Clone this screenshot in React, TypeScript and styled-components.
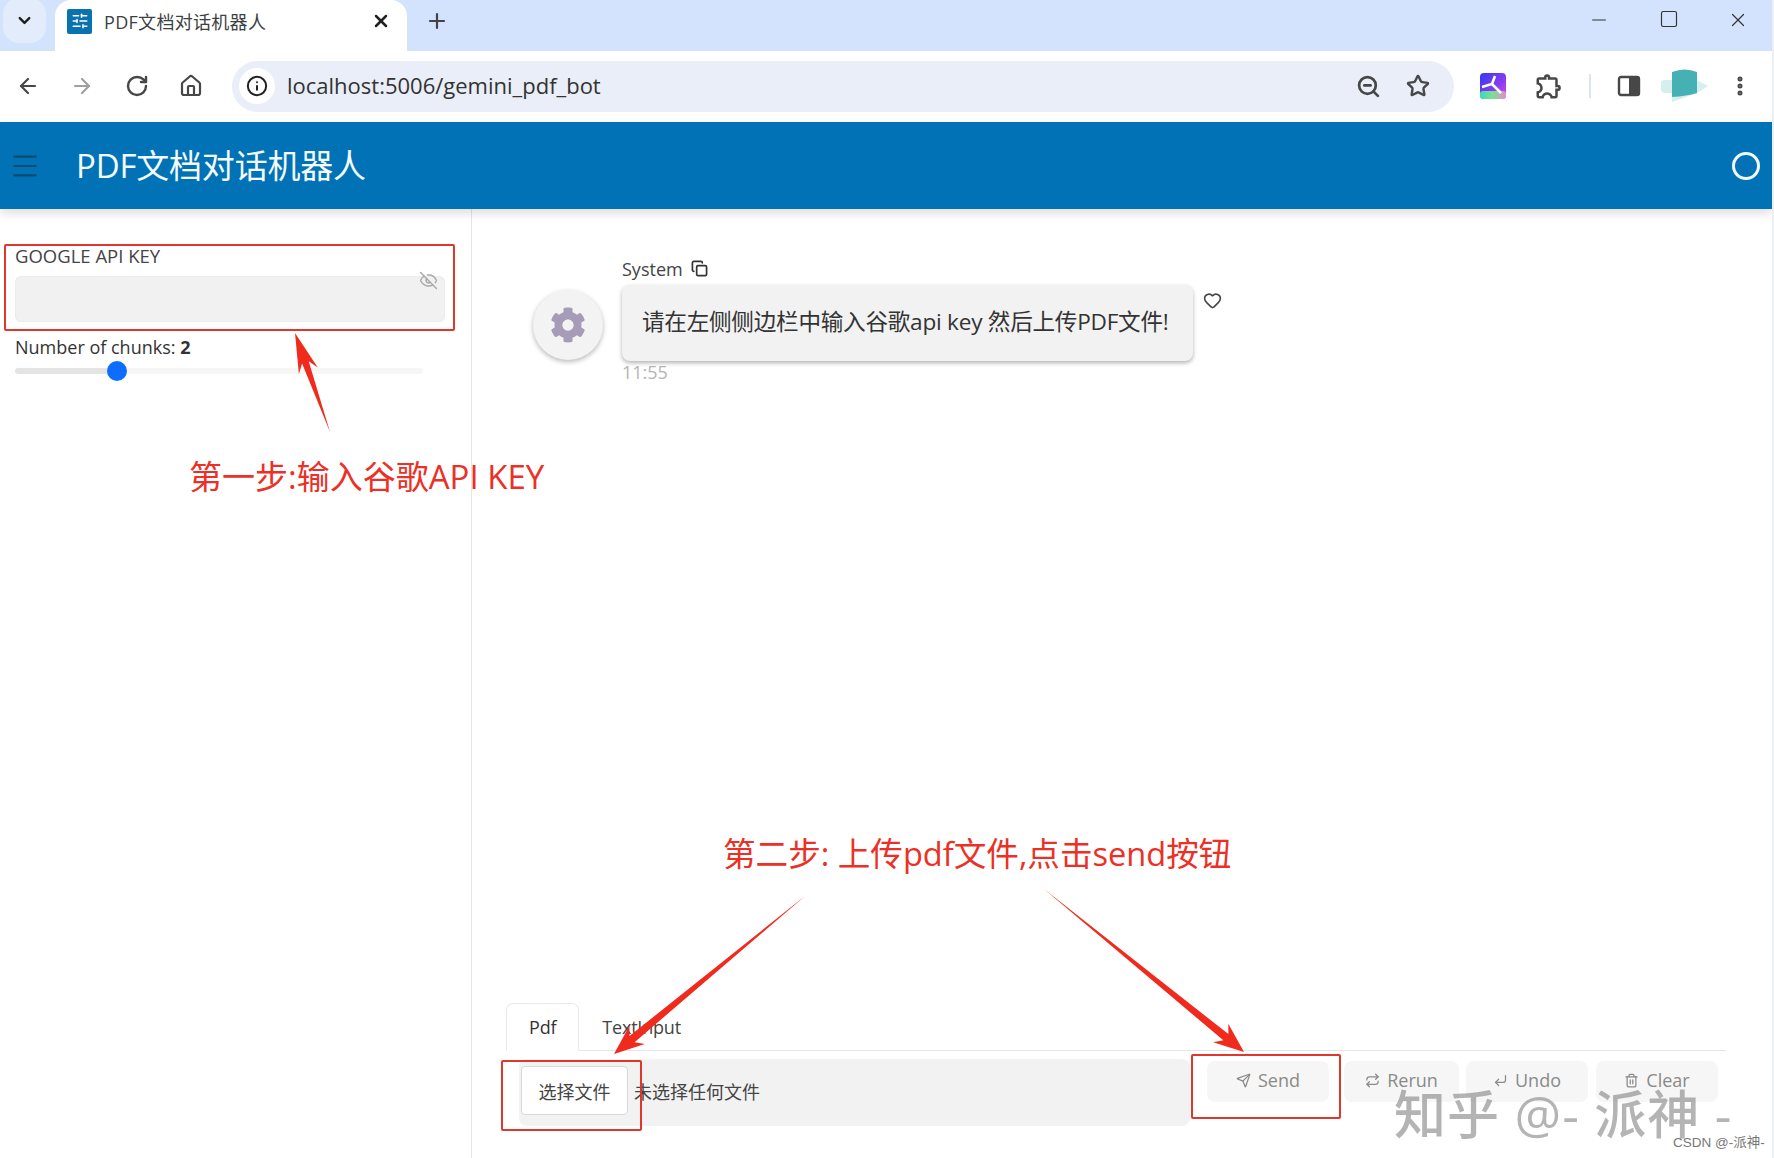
import React from "react";
import styled, { createGlobalStyle } from "styled-components";
import {
  ArrowLeft, ArrowRight, RotateCw, Home, Info, ZoomOut, Star, MoreVertical,
  Minus, Square, X, Menu, EyeOff, Copy, Heart, Send, Repeat, CornerDownLeft, Trash2,
  Plus, ChevronDown, SlidersHorizontal,
} from "lucide-react";
import { FaCog } from "react-icons/fa";
import { MdOutlineExtension } from "react-icons/md";

const SANS = `"Open Sans", "Noto Sans CJK SC", sans-serif`;

const Global = createGlobalStyle`
  html, body { margin: 0; padding: 0; background: #fff; }
  body { font-family: ${SANS}; width: 1774px; height: 1158px; overflow: hidden; }
  * { box-sizing: border-box; }
`;

const Page = styled.div`
  position: relative;
  width: 1774px;
  height: 1158px;
  display: flex;
  flex-direction: column;
  overflow: hidden;
  border-right: 2px solid #eceff1;
`;

/* browser chrome */
const TabStrip = styled.div`
  height: 51px;
  flex: none;
  background: #d3e3fd;
  display: flex;
  align-items: flex-start;
  padding-left: 3px;
`;
const TabMenu = styled.div`
  width: 43px;
  height: 45px;
  margin-top: -2px;
  border-radius: 16px;
  background: #e3ecfb;
  display: flex;
  align-items: center;
  justify-content: center;
  color: #1f1f1f;
`;
const ActiveTab = styled.div`
  width: 352px;
  height: 51px;
  margin-left: 9px;
  background: #fff;
  border-radius: 16px 16px 0 0;
  display: flex;
  align-items: center;
  padding: 0 16px 9px 12px;
`;
const Favicon = styled.div`
  width: 25px;
  height: 25px;
  background: #0b72b0;
  border-radius: 2px;
  display: flex;
  align-items: center;
  justify-content: center;
  color: #fff;
  flex: none;
`;
const TabTitle = styled.span`
  margin-left: 12px;
  flex: 1;
  font-size: 18px;
  color: #3c4043;
  letter-spacing: 0.3px;
`;
const NewTab = styled.div`
  margin: 9px 0 0 18px;
  color: #444;
  display: flex;
`;
const WindowControls = styled.div`
  margin-left: auto;
  display: flex;
  width: 184px;
  padding: 9px 23px 0 0;
  justify-content: space-between;
  color: #333;
`;

const Toolbar = styled.div`
  height: 71px;
  flex: none;
  background: #fff;
  border-radius: 0 12px 0 0;
  display: flex;
  align-items: center;
  padding: 0 0 1px 16px;
  color: #474747;
`;
const NavIcons = styled.div`
  display: flex;
  gap: 30.4px;
  width: 216px;
  flex: none;
`;
const NavSlot = styled.div<{ $dim?: boolean }>`
  color: ${(p) => (p.$dim ? "#a0a0a0" : "#474747")};
  display: flex;
`;
const AddressPill = styled.div`
  width: 1222px;
  height: 51px;
  flex: none;
  background: #e9eef8;
  border-radius: 26px;
  display: flex;
  align-items: center;
  padding: 0 24px 0 7px;
`;
const InfoDot = styled.div`
  width: 36px;
  height: 36px;
  background: #fff;
  border-radius: 50%;
  display: flex;
  align-items: center;
  justify-content: center;
  color: #222;
  flex: none;
`;
const UrlText = styled.span`
  margin-left: 12px;
  padding-bottom: 2px;
  flex: 1;
  font-size: 22px;
  color: #333;
`;
const PillIcons = styled.div`
  display: flex;
  gap: 25px;
  align-items: center;
`;
const ExtIcons = styled.div`
  display: grid;
  grid-template-columns: 54px 58px 24px 54px 56px 56px;
  justify-items: center;
  align-items: center;
  margin-left: 12px;
`;
const ToolSep = styled.div`
  width: 2px;
  height: 24px;
  background: #dbe3f2;
`;

/* app */
const AppHeader = styled.header`
  height: 87px;
  flex: none;
  background: #0072b5;
  display: flex;
  align-items: center;
  padding: 0 12px 0 9px;
  box-shadow: 0 4px 10px rgba(0, 0, 0, 0.14);
  position: relative;
  z-index: 1;
`;
const Burger = styled.div`
  color: #0d4a70;
  display: flex;
`;
const AppTitle = styled.h1`
  margin: 0 0 0 35px;
  padding-bottom: 3px;
  flex: 1;
  font-size: 33px;
  font-weight: 400;
  color: #f4fafd;
  letter-spacing: -0.2px;
`;
const StatusRing = styled.div`
  width: 28px;
  height: 28px;
  border: 3.5px solid #f2f8fb;
  border-radius: 50%;
`;

const Body = styled.div`
  flex: 1;
  display: flex;
  min-height: 0;
`;
const Sidebar = styled.aside`
  width: 472px;
  flex: none;
  border-right: 1px solid #e6e6e6;
  padding: 35px 15px 0;
  color: #333;
`;
const FieldLabel = styled.div`
  font-size: 18.5px;
  line-height: 24px;
  color: #444;
`;
const KeyField = styled.div`
  position: relative;
  width: 430px;
  height: 46px;
  margin-top: 8px;
  background: #f1f1f1;
  border-radius: 6px;
  box-shadow: inset 0 0 0 1px #ececec;
`;
const EyeSlot = styled.div`
  position: absolute;
  right: 7px;
  top: -5px;
  color: #a9a9a9;
  display: flex;
`;
const ChunksLabel = styled.div`
  margin-top: 13px;
  font-size: 18px;
  line-height: 24px;
  color: #333;
  b { font-weight: 700; }
`;
const SliderTrack = styled.div`
  position: relative;
  width: 408px;
  height: 6px;
  margin-top: 9px;
  background: #f6f6f6;
  border-radius: 3px;
`;
const SliderFill = styled.div`
  height: 100%;
  background: #e4e4e4;
  border-radius: 3px;
`;
const SliderThumb = styled.div`
  position: absolute;
  top: -7px;
  width: 20px;
  height: 20px;
  margin-left: -10px;
  background: #0d6efd;
  border-radius: 50%;
`;

const Main = styled.main`
  flex: 1;
  min-width: 0;
  display: flex;
  flex-direction: column;
  padding: 48px 46px 32px 34px;
`;
const ChatArea = styled.section`
  display: flex;
  align-items: center;
  align-self: flex-start;
  padding-left: 27px;
  gap: 19px;
  height: 127px;
  flex: none;
`;
const Avatar = styled.div`
  width: 70px;
  height: 70px;
  margin-top: 8px;
  background: #f3f3f3;
  border-radius: 50%;
  box-shadow: 0 2px 5px rgba(0, 0, 0, 0.28);
  display: flex;
  align-items: center;
  justify-content: center;
  color: #a69cb7;
  flex: none;
`;
const MessageColumn = styled.div`
  display: flex;
  flex-direction: column;
`;
const SenderRow = styled.div`
  display: flex;
  align-items: center;
  gap: 8px;
  height: 26px;
  padding-bottom: 6px;
  font-size: 18px;
  color: #444;
`;
const BubbleRow = styled.div`
  display: flex;
  align-items: flex-start;
  gap: 10px;
`;
const Bubble = styled.div`
  width: 571px;
  height: 76px;
  background: #f2f2f2;
  border-radius: 8px;
  box-shadow: 0 2px 4px rgba(0, 0, 0, 0.3);
  display: flex;
  align-items: center;
  padding: 0 0 5px 20px;
  font-size: 22.6px;
  color: #333;
  white-space: nowrap;
  letter-spacing: -0.25px;
`;
const HeartSlot = styled.div`
  margin-top: 6px;
  color: #444;
  display: flex;
`;
const TimeStamp = styled.div`
  margin-top: 0;
  font-size: 18px;
  line-height: 22px;
  color: #b5b5b5;
`;
const Spacer = styled.div`
  flex: 1;
`;
const TabBar = styled.div`
  display: flex;
  height: 48px;
  border-bottom: 1px solid #e6e6e6;
  font-size: 18px;
  color: #444;
`;
const InputTab = styled.div<{ $active?: boolean }>`
  display: flex;
  align-items: center;
  padding: 0 ${(p) => (p.$active ? "22px" : "23px")};
  letter-spacing: -0.2px;
  ${(p) =>
    p.$active
      ? `border: 1px solid #eaeaea; border-bottom: 1px solid #fff; border-radius: 7px 7px 0 0; margin-bottom: -1px; background: #fff; color: #333;`
      : ""}
`;
const ActionRow = styled.div`
  display: flex;
  align-items: flex-start;
  margin: 8px 0 0 13px;
`;
const FileField = styled.div`
  width: 671px;
  height: 67px;
  background: #f2f2f2;
  border-radius: 8px;
  display: flex;
  align-items: center;
  padding: 0 0 4px 2px;
  font-size: 18px;
  color: #444;
  margin-right: 17px;
  flex: none;
`;
const FileButton = styled.div`
  width: 107px;
  height: 49px;
  background: #fff;
  border: 1px solid #d9d9d9;
  border-radius: 4px;
  display: flex;
  align-items: center;
  justify-content: center;
  margin-right: 6px;
`;
const ActionButton = styled.div<{ $w: number; $gap: number }>`
  width: ${(p) => p.$w}px;
  height: 41px;
  margin: 2px ${(p) => p.$gap}px 0 0;
  padding-bottom: 3px;
  background: #f6f6f6;
  border-radius: 8px;
  display: flex;
  align-items: center;
  justify-content: center;
  gap: 7px;
  font-size: 18px;
  color: #8a8a8a;
  flex: none;
`;

/* annotations painted over the screenshot */
const RedBox = styled.div<{ $x: number; $y: number; $w: number; $h: number }>`
  position: absolute;
  left: ${(p) => p.$x}px;
  top: ${(p) => p.$y}px;
  width: ${(p) => p.$w}px;
  height: ${(p) => p.$h}px;
  border: 2.5px solid #e0362c;
  border-radius: 2px;
  pointer-events: none;
`;
const RedNote = styled.div<{ $x: number; $y: number; $size: number }>`
  position: absolute;
  left: ${(p) => p.$x}px;
  top: ${(p) => p.$y}px;
  font-size: ${(p) => p.$size}px;
  line-height: 44px;
  color: #ec3026;
  white-space: nowrap;
`;
const ArrowLayer = styled.svg`
  position: absolute;
  inset: 0;
  pointer-events: none;
`;
const Watermark = styled.div`
  position: absolute;
  left: 1394px;
  top: 1083px;
  font-size: 52px;
  line-height: 62px;
  font-weight: 500;
  color: rgba(125, 125, 125, 0.58);
  letter-spacing: 1px;
  white-space: nowrap;
`;
const Credit = styled.div`
  position: absolute;
  left: 1673px;
  top: 1134px;
  font-size: 13.5px;
  line-height: 18px;
  color: #777;
  font-family: "Liberation Sans", "Noto Sans CJK SC", sans-serif;
  white-space: nowrap;
`;

type Pt = [number, number];
function arrowPoints(tail: Pt, tip: Pt, bodyW: number, headW: number, headL: number): string {
  const dx = tip[0] - tail[0];
  const dy = tip[1] - tail[1];
  const len = Math.hypot(dx, dy);
  const ux = dx / len;
  const uy = dy / len;
  const nx = -uy;
  const ny = ux;
  const bx = tip[0] - ux * headL;
  const by = tip[1] - uy * headL;
  const neckX = tip[0] - ux * headL * 0.78;
  const neckY = tip[1] - uy * headL * 0.78;
  const pts: Pt[] = [
    tail,
    [neckX + (nx * bodyW) / 2, neckY + (ny * bodyW) / 2],
    [bx + (nx * headW) / 2, by + (ny * headW) / 2],
    tip,
    [bx - (nx * headW) / 2, by - (ny * headW) / 2],
    [neckX - (nx * bodyW) / 2, neckY - (ny * bodyW) / 2],
  ];
  return pts.map((p) => p.join(",")).join(" ");
}

const SidePanelIcon = () => (
  <svg width="24" height="24" viewBox="0 0 24 24">
    <rect x="2" y="3" width="20" height="18" rx="2" fill="none" stroke="#474747" strokeWidth="2.4" />
    <rect x="12" y="3" width="10" height="18" rx="1" fill="#474747" />
  </svg>
);
const ExtensionTile = () => (
  <svg width="26" height="26" viewBox="0 0 26 26">
    <defs>
      <linearGradient id="tile" x1="0" y1="0" x2="1" y2="1">
        <stop offset="0" stopColor="#2f3cf0" />
        <stop offset="0.6" stopColor="#8a3cf0" />
        <stop offset="1" stopColor="#d94ce0" />
      </linearGradient>
      <linearGradient id="tileBase" x1="0" y1="0" x2="1" y2="0">
        <stop offset="0" stopColor="#3fd7c0" />
        <stop offset="0.5" stopColor="#7fe08a" />
        <stop offset="1" stopColor="#e28ad0" />
      </linearGradient>
    </defs>
    <rect width="26" height="26" rx="4" fill="url(#tile)" />
    <rect y="18" width="26" height="8" rx="3" fill="url(#tileBase)" />
    <path d="M2 14 L12 11 L15 3 M12 11 L21 20" stroke="#fff" strokeWidth="2.6" fill="none" />
  </svg>
);
const ProfileBlob = () => (
  <svg width="47" height="34" viewBox="0 0 47 34">
    <path d="M0 14 Q0 11 4 11 H36 L47 17 L36 24 L11 33 V24 H4 Q0 24 0 20 Z" fill="#d6eeee" />
    <path d="M11 3 Q24 -2 36 3 V24 Q26 27 11 28 Z" fill="#45b1b5" />
  </svg>
);

const App: React.FC = () => (
  <Page>
    <Global />
    <TabStrip>
      <TabMenu><ChevronDown size={19} strokeWidth={3} /></TabMenu>
      <ActiveTab>
        <Favicon><SlidersHorizontal size={18} strokeWidth={2} /></Favicon>
        <TabTitle>PDF文档对话机器人</TabTitle>
        <X size={20} strokeWidth={3} color="#222" />
      </ActiveTab>
      <NewTab><Plus size={24} strokeWidth={2.2} /></NewTab>
      <WindowControls>
        <Minus size={22} strokeWidth={1.2} />
        <Square size={20} strokeWidth={1.4} />
        <X size={22} strokeWidth={1.3} />
      </WindowControls>
    </TabStrip>
    <Toolbar>
      <NavIcons>
        <NavSlot><ArrowLeft size={24} strokeWidth={2.2} /></NavSlot>
        <NavSlot $dim><ArrowRight size={24} strokeWidth={2.2} /></NavSlot>
        <NavSlot><RotateCw size={24} strokeWidth={2.4} /></NavSlot>
        <NavSlot><Home size={24} strokeWidth={2.2} /></NavSlot>
      </NavIcons>
      <AddressPill>
        <InfoDot><Info size={22} strokeWidth={2.2} /></InfoDot>
        <UrlText>localhost:5006/gemini_pdf_bot</UrlText>
        <PillIcons>
          <ZoomOut size={25} strokeWidth={2.6} />
          <Star size={24} strokeWidth={2.4} />
        </PillIcons>
      </AddressPill>
      <ExtIcons>
        <ExtensionTile />
        <MdOutlineExtension size={30} />
        <ToolSep />
        <SidePanelIcon />
        <ProfileBlob />
        <MoreVertical size={24} strokeWidth={3} />
      </ExtIcons>
    </Toolbar>
    <AppHeader>
      <Burger><Menu size={32} strokeWidth={1.6} /></Burger>
      <AppTitle>PDF文档对话机器人</AppTitle>
      <StatusRing />
    </AppHeader>
    <Body>
      <Sidebar>
        <FieldLabel>GOOGLE API KEY</FieldLabel>
        <KeyField>
          <EyeSlot><EyeOff size={19} strokeWidth={1.8} /></EyeSlot>
        </KeyField>
        <ChunksLabel>Number of chunks: <b>2</b></ChunksLabel>
        <SliderTrack>
          <SliderFill style={{ width: `${(102 / 408) * 100}%` }} />
          <SliderThumb style={{ left: `${(102 / 408) * 100}%` }} />
        </SliderTrack>
      </Sidebar>
      <Main>
        <ChatArea>
          <Avatar><FaCog size={36} /></Avatar>
          <MessageColumn>
            <SenderRow>System <Copy size={17} strokeWidth={2.4} color="#333" /></SenderRow>
            <BubbleRow>
              <Bubble>请在左侧侧边栏中输入谷歌api key 然后上传PDF文件!</Bubble>
              <HeartSlot><Heart size={19} strokeWidth={2} /></HeartSlot>
            </BubbleRow>
            <TimeStamp>11:55</TimeStamp>
          </MessageColumn>
        </ChatArea>
        <Spacer />
        <TabBar>
          <InputTab $active>Pdf</InputTab>
          <InputTab>TextInput</InputTab>
        </TabBar>
        <ActionRow>
          <FileField>
            <FileButton>选择文件</FileButton>
            未选择任何文件
          </FileField>
          <ActionButton $w={122} $gap={15}><Send size={15} />Send</ActionButton>
          <ActionButton $w={115} $gap={7}><Repeat size={15} />Rerun</ActionButton>
          <ActionButton $w={122} $gap={8}><CornerDownLeft size={15} />Undo</ActionButton>
          <ActionButton $w={122} $gap={0}><Trash2 size={15} />Clear</ActionButton>
        </ActionRow>
      </Main>
    </Body>

    <RedBox $x={4} $y={244} $w={451} $h={87} />
    <RedBox $x={501} $y={1060} $w={141} $h={71} />
    <RedBox $x={1191} $y={1054} $w={150} $h={65} />
    <ArrowLayer width="1774" height="1158" viewBox="0 0 1774 1158">
      <polygon points={arrowPoints([330, 432], [295, 333], 7, 20, 40)} fill="#f02a1c" />
      <polygon points={arrowPoints([805, 896], [614, 1054], 8, 24, 30)} fill="#f02a1c" />
      <polygon points={arrowPoints([1044, 889], [1244, 1052], 8, 24, 30)} fill="#f02a1c" />
    </ArrowLayer>
    <RedNote $x={189} $y={455} $size={33}>第一步:输入谷歌API KEY</RedNote>
    <RedNote $x={723} $y={832} $size={32.6}>第二步: 上传pdf文件,点击send按钮</RedNote>
    <Watermark>知乎 @- 派神 -</Watermark>
    <Credit>CSDN @-派神-</Credit>
  </Page>
);

export default App;
